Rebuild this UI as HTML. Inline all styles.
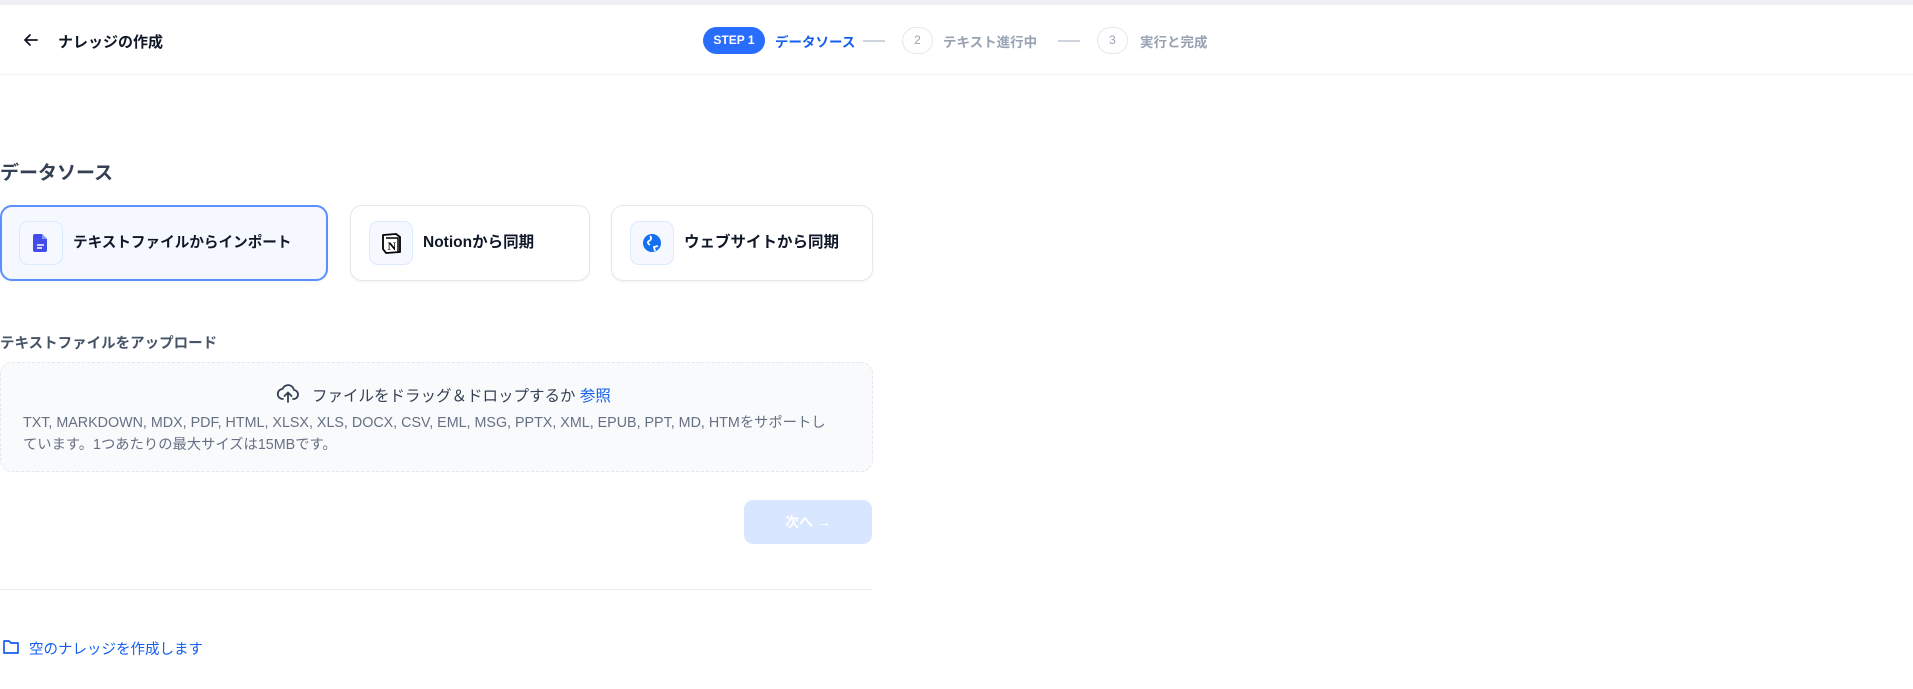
<!DOCTYPE html>
<html><head><meta charset="utf-8"><style>
*{box-sizing:border-box;margin:0;padding:0}
body{width:1913px;height:689px;background:#fff;font-family:"Liberation Sans","Noto Sans CJK JP",sans-serif;position:relative;overflow:hidden;color:#101828}
.a{position:absolute;white-space:nowrap}
.card{position:absolute;top:205px;height:76px;border:1px solid #e5e7eb;border-radius:12px;background:#fff;box-shadow:0 1px 2px rgba(16,24,40,.05)}
.ib{position:absolute;left:18px;top:15px;width:44px;height:44px;border:1px solid #dbeafe;border-radius:9px;background:#f5f8ff;display:flex;align-items:center;justify-content:center}
.ct{position:absolute;left:72px;top:0;line-height:74px;font-size:14.6px;font-weight:700;color:#101828;white-space:nowrap}
.circ{position:absolute;top:27px;width:31px;height:27px;border:1.5px solid #e5e7eb;border-radius:14px;font-size:12px;color:#98a2b3;text-align:center;line-height:24px}
.st{position:absolute;top:31px;font-size:13.5px;font-weight:700;color:#98a2b3;white-space:nowrap}
.dash{position:absolute;top:40px;height:1.5px;background:#d0d5dd;width:22px}
</style></head><body>
<div class="a" style="left:0;top:0;width:1913px;height:5px;background:#eef0f4"></div>
<div class="a" style="left:0;top:74px;width:1913px;height:1px;background:#f2f4f7"></div>
<svg class="a" style="left:22px;top:31px" width="18" height="18" viewBox="0 0 18 18"><path d="M15 9H3M8 4L3 9l5 5" fill="none" stroke="#101828" stroke-width="1.8" stroke-linecap="round" stroke-linejoin="round"/></svg>
<div class="a" style="left:58px;top:31px;font-size:15px;font-weight:700">ナレッジの作成</div>
<div class="a" style="left:703px;top:27px;width:62px;height:27px;border-radius:14px;background:#296dff;color:#fff;font-size:12px;font-weight:700;text-align:center;line-height:27px">STEP 1</div>
<div class="st" style="left:775px;color:#155eef">データソース</div>
<div class="dash" style="left:863px"></div>
<div class="circ" style="left:902px">2</div>
<div class="st" style="left:943px">テキスト進行中</div>
<div class="dash" style="left:1058px"></div>
<div class="circ" style="left:1097px">3</div>
<div class="st" style="left:1140px">実行と完成</div>

<div class="a" style="left:0;top:158px;font-size:19px;font-weight:700;color:#344054">データソース</div>

<div class="card" style="left:0;width:328px;border:2px solid #5b8ff9;background:#f5f8ff">
<div class="ib" style="left:17px;top:14px"><svg width="18" height="20" viewBox="0 0 18 20"><path d="M3 1h7l5 5v11a2 2 0 0 1-2 2H3a2 2 0 0 1-2-2V3a2 2 0 0 1 2-2z" fill="#444ce7"/><path d="M10 1v5h5" fill="#8098f9"/><path d="M5 12h7M5 15h5" stroke="#fff" stroke-width="1.6"/></svg></div>
<div class="ct" style="left:71px;line-height:72px">テキストファイルからインポート</div></div>
<div class="card" style="left:350px;width:240px">
<div class="ib"><svg width="22" height="22" viewBox="0 0 22 22"><path d="M3 3l13-1 4 3v15l-14 1-3-4z" fill="#fff" stroke="#000" stroke-width="1.8" stroke-linejoin="round"/><path d="M6 6h12v14" fill="none" stroke="#000" stroke-width="1.5"/><text x="7.5" y="18" font-family="Liberation Serif" font-weight="700" font-size="12" fill="#000">N</text></svg></div>
<div class="ct" style="font-size:15.5px">Notionから同期</div></div>
<div class="card" style="left:611px;width:262px">
<div class="ib"><svg width="22" height="22" viewBox="0 0 22 22"><circle cx="11" cy="11" r="9" fill="#1570ef"/><path d="M9 4c2 2 1 4-1 5s-1 3 1 4M14 19l-1-4 4-1" fill="none" stroke="#fff" stroke-width="1.8"/></svg></div>
<div class="ct" style="font-size:15.5px">ウェブサイトから同期</div></div>

<div class="a" style="left:0;top:332px;font-size:14.5px;font-weight:700;color:#475467">テキストファイルをアップロード</div>
<div class="a" style="left:0;top:362px;width:873px;height:110px;border:1px dashed #e4e7ec;border-radius:12px;background:#f9fafb"></div>
<svg class="a" style="left:276px;top:381px" width="24" height="24" viewBox="0 0 24 24"><path d="M7 18a5 5 0 0 1-.5-10A6 6 0 0 1 18 9a4.5 4.5 0 0 1-1 9M12 21v-9M8.5 15l3.5-3.5 3.5 3.5" fill="none" stroke="#344054" stroke-width="1.8" stroke-linecap="round" stroke-linejoin="round"/></svg>
<div class="a" style="left:312px;top:384px;font-size:15.5px;color:#344054">ファイルをドラッグ＆ドロップするか <span style="color:#155eef">参照</span></div>
<div class="a" style="left:23px;top:412px;font-size:14.3px;line-height:22px;color:#667085">TXT, MARKDOWN, MDX, PDF, HTML, XLSX, XLS, DOCX, CSV, EML, MSG, PPTX, XML, EPUB, PPT, MD, HTMをサポートし<br>ています。1つあたりの最大サイズは15MBです。</div>

<div class="a" style="left:744px;top:500px;width:128px;height:44px;border-radius:9px;background:#d9e6ff;color:#fff;font-size:14px;font-weight:700;text-align:center;line-height:44px">次へ →</div>
<div class="a" style="left:0;top:589px;width:873px;height:1px;background:#eaecf0"></div>
<svg class="a" style="left:2px;top:638px" width="18" height="18" viewBox="0 0 18 18"><path d="M2 3h5l2 2h7v10H2z" fill="none" stroke="#155eef" stroke-width="1.7" stroke-linejoin="round"/></svg>
<div class="a" style="left:29px;top:638px;font-size:14.5px;color:#155eef">空のナレッジを作成します</div>
</body></html>
